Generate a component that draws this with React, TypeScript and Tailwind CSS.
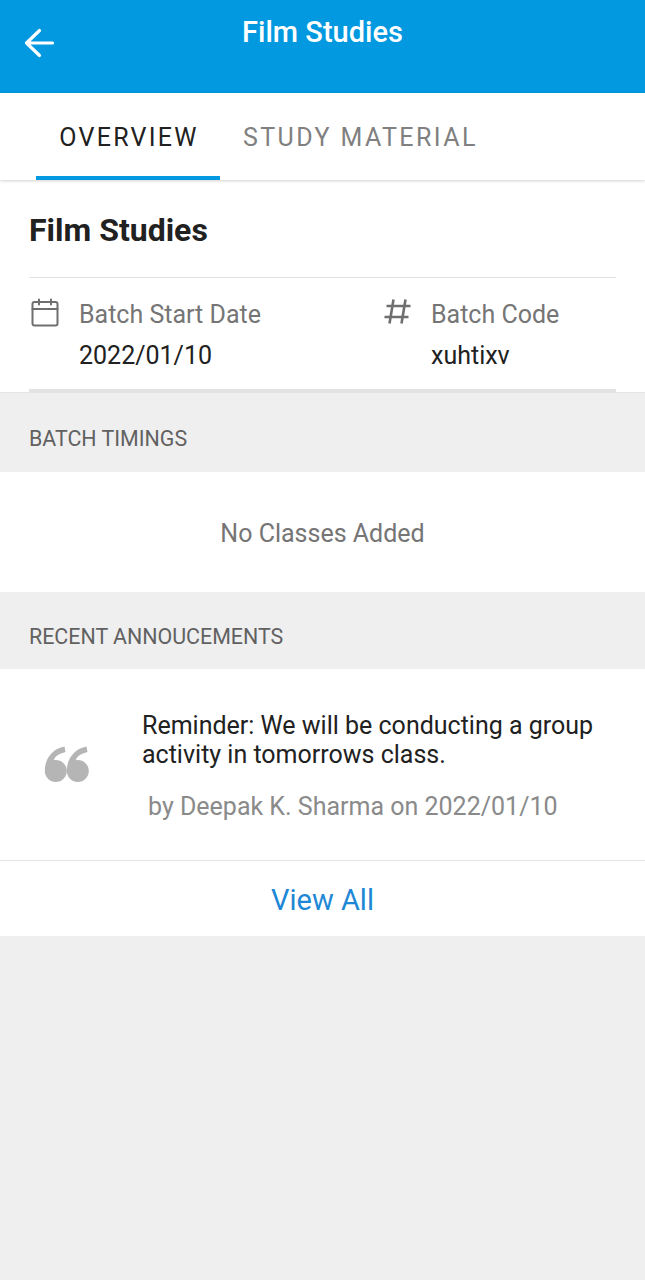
export default function App() {
  return (
    <div className="w-[645px] h-[1280px] bg-[#efefef] flex flex-col overflow-hidden font-['Roboto',sans-serif]">
      <header className="relative h-[93px] shrink-0 bg-[#0299e0]">
        <svg className="absolute left-[24px] top-[28px]" width="31" height="31" viewBox="0 0 31 31" fill="none" stroke="#fff" strokeWidth="3.2" strokeLinecap="round" strokeLinejoin="round">
          <path d="M2.5 15h26M15.5 2.5 2.5 15l13 12.5" />
        </svg>
        <h1 className="pt-[15px] text-center text-[29px] leading-[34px] font-medium text-white">Film Studies</h1>
      </header>
      <nav className="h-[87px] shrink-0 bg-white flex pl-[36px] shadow-[0_1px_3px_rgba(0,0,0,0.18)] relative">
        <div className="w-[184px] h-full border-b-[4px] border-[#0299e0] text-center pl-[2px] pt-[30px] text-[25px] leading-[30px] tracking-[2.25px] text-[#212121]">OVERVIEW</div>
        <div className="pl-[23px] pt-[30px] text-[25px] leading-[30px] tracking-[2.4px] text-[#808080]">STUDY MATERIAL</div>
      </nav>
      <section className="bg-white h-[213px] shrink-0 px-[29px] border-b border-[#e4e4e4]">
        <h2 className="pt-[32px] h-[98px] border-b border-[#e2e2e2] text-[32px] leading-[36px] font-bold text-[#212121]">Film Studies</h2>
        <div className="flex h-[115px] border-b-[4px] border-[#e3e3e3]">
          <div className="w-[353px] flex">
            <svg className="mt-[20px] ml-[2px]" width="28" height="29" viewBox="0 0 28 29" fill="none" stroke="#6f6f6f" strokeWidth="2" strokeLinecap="round" strokeLinejoin="round">
              <rect x="1.5" y="4" width="25" height="23.5" rx="2" />
              <path d="M1.5 11h25M8 1.500v5M20 1.500v5" />
            </svg>
            <div className="ml-[20px]">
              <div className="pt-[21px] text-[25px] leading-[32px] text-[#757575]">Batch Start Date</div>
              <div className="mt-[9px] text-[25px] leading-[32px] text-[#212121]">2022/01/10</div>
            </div>
          </div>
          <div className="flex">
            <svg className="mt-[20px] ml-[1px]" width="30" height="27" viewBox="0 0 30 27" fill="none" stroke="#6f6f6f" strokeWidth="2.6">
              <path d="M3.500 8h24M1.500 19h24M10.500 1.500 6.500 25.500M22.500 1.500l-4 24" />
            </svg>
            <div className="ml-[18px]">
              <div className="pt-[21px] text-[25px] leading-[32px] text-[#757575]">Batch Code</div>
              <div className="mt-[9px] text-[25px] leading-[32px] text-[#212121]">xuhtixv</div>
            </div>
          </div>
        </div>
      </section>
      <div className="h-[79px] shrink-0 px-[29px] pt-[32px] text-[21.4px] leading-[28px] text-[#616161]">BATCH TIMINGS</div>
      <div className="h-[120px] shrink-0 bg-white flex items-center justify-center pt-[4px] text-[25px] text-[#757575]">No Classes Added</div>
      <div className="h-[77px] shrink-0 px-[29px] pt-[31px] text-[21.4px] leading-[28px] text-[#616161]">RECENT ANNOUCEMENTS</div>
      <section className="bg-white h-[192px] shrink-0 flex border-b border-[#e4e4e4]">
        <svg className="ml-[44px] mt-[77px]" width="45" height="37" viewBox="0 0 45 37" fill="#b5b5b5">
          <path d="M20.500 .5C8 3 .8 13 .8 25a11 11 0 1 0 11-11c-.7 0-1.300 0-2 .2C11 10.500 15 7.500 21.500 6z" />
          <path d="M42.500 .5C30 3 22.800 13 22.800 25a11 11 0 1 0 11-11c-.7 0-1.300 0-2 .2C33 10.500 37 7.500 43.500 6z" />
        </svg>
        <div className="ml-[53px] w-[470px]">
          <p className="pt-[42px] text-[25px] leading-[29px] text-[#212121]">Reminder: We will be conducting a group activity in tomorrows class.</p>
          <p className="pl-[6px] mt-[22px] text-[25px] leading-[32px] text-[#8a8a8a]">by Deepak K. Sharma on 2022/01/10</p>
        </div>
      </section>
      <div className="h-[75px] shrink-0 bg-white flex items-center justify-center pt-[4px] text-[29px] text-[#1e88d6]">View All</div>
    </div>
  );
}
